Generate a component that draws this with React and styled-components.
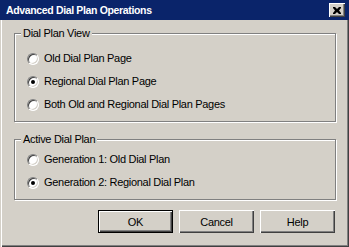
import styled, { createGlobalStyle } from 'styled-components';

const Global = createGlobalStyle`
  html, body {
    margin: 0;
    padding: 0;
    background: #d4d0c8;
  }
`;

const groups = [
  {
    title: 'Dial Plan View',
    top: 18,
    options: ['Old Dial Plan Page', 'Regional Dial Plan Page', 'Both Old and Regional Dial Plan Pages'],
    selected: 1,
  },
  {
    title: 'Active Dial Plan',
    top: 13,
    options: ['Generation 1: Old Dial Plan', 'Generation 2: Regional Dial Plan'],
    selected: 1,
  },
];

const CloseIcon = () => (
  <svg width="8" height="7" viewBox="0 0 8 7">
    <path d="M0 0h2l2 2 2-2h2v1L6 3.5 8 6v1H6L4 5 2 7H0V6l2-2.5L0 1z" fill="#000" />
  </svg>
);

const App = () => (
  <S.Window>
    <Global />
    <S.TitleBar>
      <S.Title>Advanced Dial Plan Operations</S.Title>
      <S.CloseButton>
        <CloseIcon />
      </S.CloseButton>
    </S.TitleBar>
    <S.Body>
      {groups.map((g) => (
        <S.Group key={g.title} top={g.top}>
          <S.Legend>{g.title}</S.Legend>
          {g.options.map((label, i) => (
            <S.Option key={label}>
              <S.Radio>{i === g.selected && <S.Dot />}</S.Radio>
              {label}
            </S.Option>
          ))}
        </S.Group>
      ))}
      <S.Buttons>
        <S.Button primary>OK</S.Button>
        <S.Button>Cancel</S.Button>
        <S.Button>Help</S.Button>
      </S.Buttons>
    </S.Body>
  </S.Window>
);

const raised = 'inset 1px 1px 0 #fff, inset -1px -1px 0 #404040, inset -2px -2px 0 #808080';

const S = {
  Window: styled.div`
    width: 349px;
    height: 247px;
    box-sizing: border-box;
    display: flex;
    flex-direction: column;
    background: #d4d0c8;
    font-family: 'Liberation Sans', Arial, sans-serif;
    font-size: 11px;
    letter-spacing: -0.3px;
    color: #000;
    box-shadow: inset 1px 0 0 #d4d0c8, inset 2px 0 0 #fff, inset -1px -1px 0 #404040,
      inset -2px -2px 0 #808080;
  `,
  TitleBar: styled.div`
    height: 20px;
    flex: none;
    display: flex;
    align-items: center;
    justify-content: space-between;
    padding: 0 4px 0 6px;
    background: #0a246a;
  `,
  Title: styled.span`
    color: #fff;
    font-weight: bold;
    font-size: 10.5px;
    letter-spacing: -0.35px;
  `,
  CloseButton: styled.div`
    width: 16px;
    height: 14px;
    box-sizing: border-box;
    display: flex;
    align-items: center;
    justify-content: center;
    background: #d4d0c8;
    box-shadow: ${raised};
  `,
  Body: styled.div`
    display: flex;
    flex-direction: column;
    gap: 17px;
    padding: 13px 13px 0 14px;
  `,
  Group: styled.section`
    position: relative;
    padding: ${({ top }) => top}px 0 10px 12px;
    border: 1px solid #808080;
    box-shadow: inset 1px 1px 0 #fff, 1px 1px 0 #fff;
    display: flex;
    flex-direction: column;
    gap: 10px;
  `,
  Legend: styled.span`
    position: absolute;
    top: -7px;
    left: 6px;
    padding: 0 2px;
    background: #d4d0c8;
    line-height: 13px;
  `,
  Option: styled.div`
    display: flex;
    align-items: center;
    gap: 5px;
    height: 13px;
    line-height: 13px;
  `,
  Radio: styled.span`
    width: 12px;
    height: 12px;
    box-sizing: border-box;
    border-radius: 50%;
    background: #fff;
    border: 1px solid;
    border-color: #808080 #fff #fff #808080;
    box-shadow: inset 1px 1px 0 #404040, inset -1px -1px 0 #d4d0c8;
    display: flex;
    align-items: center;
    justify-content: center;
  `,
  Dot: styled.span`
    width: 4px;
    height: 4px;
    border-radius: 50%;
    background: #000;
  `,
  Buttons: styled.div`
    display: flex;
    justify-content: flex-end;
    gap: 6px;
    margin-top: -7px;
    padding-right: 1px;
  `,
  Button: styled.div`
    width: 75px;
    height: 23px;
    box-sizing: border-box;
    display: flex;
    align-items: center;
    justify-content: center;
    background: #d4d0c8;
    border: ${({ primary }) => (primary ? '1px solid #000' : 'none')};
    box-shadow: ${raised};
  `,
};

export default App;
